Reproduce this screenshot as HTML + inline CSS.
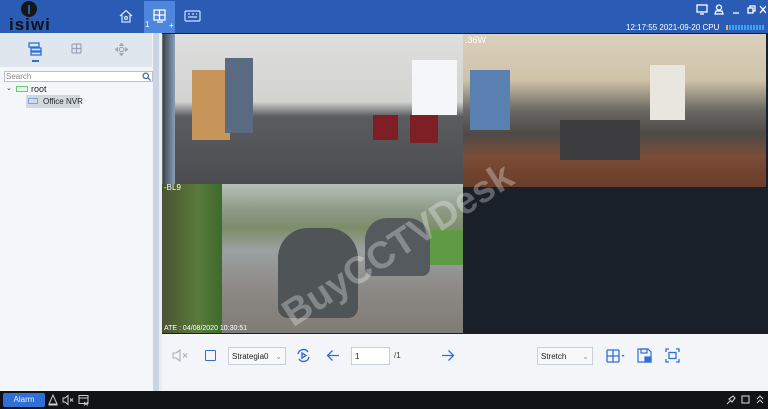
<!DOCTYPE html>
<html><head><meta charset="utf-8"><style>
*{margin:0;padding:0;box-sizing:border-box}
body{width:768px;height:409px;overflow:hidden;background:#f3f5f8;font-family:"Liberation Sans",sans-serif;position:relative}
.abs{position:absolute}
.sel{display:flex;justify-content:space-between;align-items:center;white-space:nowrap}
</style></head><body>
<div class="abs" style="left:0;top:0;width:768px;height:33px;background:#2a5cb6"></div>
<div class="abs" style="left:144px;top:1px;width:31px;height:32px;background:#4f86dd"></div>
<div class="abs" style="left:21px;top:1px;width:16px;height:16px;border-radius:50%;background:#161616"></div>
<div class="abs" style="left:28px;top:5px;width:2px;height:9px;background:#2a5cb6"></div>
<div class="abs" style="left:9px;top:15px;font:bold 17px 'Liberation Sans',sans-serif;color:#111;letter-spacing:1px">isiwi</div>
<svg class="abs" style="left:118px;top:8px" width="16" height="16" viewBox="0 0 16 16" fill="none" stroke="#cfe0fb" stroke-width="1.3"><path d="M2 8 8 2.5 14 8M4 7v7h8V7"/><circle cx="8" cy="10" r="1.5"/></svg>
<svg class="abs" style="left:152px;top:8px" width="16" height="16" viewBox="0 0 16 16" fill="none" stroke="#fff" stroke-width="1.3"><rect x="2" y="2" width="11" height="10"/><path d="M7.5 2v10M2 7h11M5 14h6"/></svg>
<div class="abs" style="left:145px;top:20px;font-size:8px;color:#fff">1</div>
<div class="abs" style="left:169px;top:21px;font-size:8px;color:#fff">+</div>
<svg class="abs" style="left:184px;top:10px" width="17" height="12" viewBox="0 0 17 12" fill="none" stroke="#cfe0fb" stroke-width="1.2"><rect x="1" y="1" width="15" height="10" rx="1"/><path d="M4 4h2M8 4h2M12 4h1M4 7h9"/></svg>
<svg class="abs" style="left:696px;top:4px" width="70" height="12" viewBox="0 0 70 12" fill="none" stroke="#fff" stroke-width="1.3"><rect x="1" y="1" width="10" height="7"/><path d="M4 10h4"/><circle cx="23" cy="3.5" r="2.5"/><path d="M19 10h8l-1-3h-6z"/><path d="M37 9h6"/><rect x="52" y="4" width="5" height="5"/><path d="M54 4V2h5v5h-2"/><path d="M64 2l6 7M70 2l-6 7"/></svg>
<div class="abs" style="left:626px;top:23px;font-size:8px;color:#fff;white-space:nowrap">12:17:55 2021-09-20 CPU</div>
<div class="abs" style="left:726px;top:25px;width:2px;height:5px;background:#f2b233"></div>
<div class="abs" style="left:729px;top:25px;width:36px;height:5px;background:repeating-linear-gradient(90deg,#39a3ff 0 2px,#2a5cb6 2px 3px)"></div>

<div class="abs" style="left:0;top:33px;width:152px;height:358px;background:#f4f7fa"></div>
<div class="abs" style="left:0;top:33px;width:152px;height:34px;background:#dfe6ee"></div>
<svg class="abs" style="left:28px;top:42px" width="14" height="14" viewBox="0 0 14 14" fill="none" stroke="#2f6fd6" stroke-width="1.3"><rect x="1" y="1" width="10" height="4"/><rect x="3" y="6" width="10" height="3"/><rect x="3" y="10" width="10" height="3"/></svg>
<div class="abs" style="left:32px;top:60px;width:7px;height:1.5px;background:#2f6fd6"></div>
<svg class="abs" style="left:71px;top:43px" width="11" height="11" viewBox="0 0 11 11" fill="none" stroke="#9aa6b4" stroke-width="1.2"><rect x="1" y="1" width="9" height="9" rx="1"/><path d="M5.5 1v9M1 5.5h9"/></svg>
<svg class="abs" style="left:115px;top:43px" width="13" height="13" viewBox="0 0 13 13" fill="none" stroke="#9aa6b4" stroke-width="1.1"><circle cx="6.5" cy="6.5" r="2.2"/><path d="M6.5 0.5l-1.5 2h3zM6.5 12.5l-1.5-2h3zM0.5 6.5l2-1.5v3zM12.5 6.5l-2-1.5v3z"/></svg>
<div class="abs" style="left:4px;top:71px;width:149px;height:11px;background:#fff;border:1px solid #b8c2cc"></div>
<div class="abs" style="left:6px;top:72px;font-size:8px;color:#888">Search</div>
<svg class="abs" style="left:142px;top:72px" width="9" height="9" viewBox="0 0 9 9" fill="none" stroke="#3866a8" stroke-width="1.2"><circle cx="3.8" cy="3.8" r="2.7"/><path d="M5.8 5.8 8.5 8.5"/></svg>
<div class="abs" style="left:6px;top:84px;font-size:7px;color:#333">⌄</div>
<div class="abs" style="left:16px;top:86px;width:12px;height:6px;border:1.5px solid #6acb6a;background:#e5f7e5"></div>
<div class="abs" style="left:31px;top:84px;font-size:9px;color:#222">root</div>
<div class="abs" style="left:26px;top:95px;width:54px;height:13px;background:#d3d8de"></div>
<div class="abs" style="left:28px;top:98px;width:10px;height:6px;border:1px solid #7fa5d3;background:#c9dcf2"></div>
<div class="abs" style="left:43px;top:97px;font-size:8px;color:#222">Office NVR</div>
<div class="abs" style="left:153px;top:33px;width:6px;height:358px;background:#c9d5e2"></div>
<div class="abs" style="left:159px;top:33px;width:3px;height:358px;background:#e8eef4"></div>

<div class="abs" style="left:162px;top:33px;width:606px;height:301px;background:#1a2029"></div>
<div class="abs" style="left:463px;top:34px;width:303px;height:153px;background:linear-gradient(180deg,#d9d0bd 0%,#cfc3a8 30%,#6a6864 50%,#4d4a47 65%,#7a4d36 80%,#6a3c2a 100%)"></div>
<div class="abs" style="left:470px;top:70px;width:40px;height:60px;background:#5a7fb1"></div>
<div class="abs" style="left:650px;top:65px;width:35px;height:55px;background:#e9e6df"></div>
<div class="abs" style="left:560px;top:120px;width:80px;height:40px;background:#3c3c3e"></div>
<div class="abs" style="left:465px;top:35px;font-size:9px;color:#fff">.36W</div>
<div class="abs" style="left:162px;top:183px;width:301px;height:150px;background:linear-gradient(180deg,#b7c2b8 0%,#8d9a86 18%,#7d8d6a 30%,#9aa1a2 45%,#8d8a86 70%,#7f7b76 100%)"></div>
<div class="abs" style="left:162px;top:183px;width:60px;height:150px;background:linear-gradient(90deg,#4b5232,#5a7a3a 60%,#3d6a2c)"></div>
<div class="abs" style="left:380px;top:230px;width:83px;height:35px;background:#5f9a44"></div>
<div class="abs" style="left:278px;top:228px;width:80px;height:90px;border-radius:30px 30px 10px 10px;background:#4f5456"></div>
<div class="abs" style="left:365px;top:218px;width:65px;height:58px;border-radius:22px 22px 8px 8px;background:#555a5e"></div>
<div class="abs" style="left:164px;top:183px;font-size:8px;color:#fff">-BL9</div>
<div class="abs" style="left:164px;top:325px;font-size:7px;color:#fff">ATE : 04/08/2020 10:30:51</div>
<div class="abs" style="left:162px;top:34px;width:301px;height:150px;background:#6a6e6e"></div>
<div class="abs" style="left:175px;top:34px;width:288px;height:150px;background:linear-gradient(180deg,#dedede 0%,#d3d3d1 45%,#5a5c60 55%,#4a4c50 100%)"></div>
<div class="abs" style="left:192px;top:70px;width:38px;height:70px;background:#c7955a"></div>
<div class="abs" style="left:225px;top:58px;width:28px;height:75px;background:#5a6a80"></div>
<div class="abs" style="left:412px;top:60px;width:45px;height:55px;background:#f4f6f8"></div>
<div class="abs" style="left:373px;top:115px;width:25px;height:25px;background:#7d1f24"></div>
<div class="abs" style="left:410px;top:115px;width:28px;height:28px;background:#7d1f24"></div>
<div class="abs" style="left:163px;top:34px;width:12px;height:150px;background:linear-gradient(90deg,#3a4450,#8aa0b8)"></div>
<div class="abs" style="left:275px;top:300px;font:bold 38px 'Liberation Sans',sans-serif;color:rgba(255,255,255,0.3);transform:rotate(-33deg);transform-origin:left top;white-space:nowrap">BuyCCTVDesk</div>

<div class="abs" style="left:162px;top:334px;width:606px;height:57px;background:#f3f5f8"></div>
<svg class="abs" style="left:172px;top:349px" width="16" height="13" viewBox="0 0 16 13" fill="none" stroke="#a8b0bb" stroke-width="1.1"><path d="M1 4h3l4-3v11l-4-3H1z"/><path d="M11 4.5l4 4M15 4.5l-4 4"/></svg>
<div class="abs" style="left:205px;top:350px;width:11px;height:11px;border:1.5px solid #2f6fd6;border-radius:1px"></div>
<div class="abs sel" style="left:228px;top:347px;width:58px;height:18px;border:1px solid #c8d0d9;background:#f6f8fa;font-size:8px;padding:0 3px;color:#222"><span>Strategia0</span><span style="color:#999">⌄</span></div>
<svg class="abs" style="left:296px;top:348px" width="15" height="15" viewBox="0 0 15 15" fill="none" stroke="#2f6fd6" stroke-width="1.4"><path d="M2 6a5.5 5.5 0 0 1 10-2M13 9a5.5 5.5 0 0 1-10 2"/><path d="M6 5v5l4-2.5z"/></svg>
<svg class="abs" style="left:326px;top:349px" width="14" height="13" viewBox="0 0 14 13" fill="none" stroke="#2f6fd6" stroke-width="1.3"><path d="M13 6.5H1.5M6.5 1.5 1.5 6.5l5 5"/></svg>
<div class="abs sel" style="left:351px;top:347px;width:39px;height:18px;border:1px solid #c8d0d9;background:#fff;font-size:8px;padding:0 3px;color:#222">1</div>
<div class="abs" style="left:394px;top:351px;font-size:8px;color:#333">/1</div>
<svg class="abs" style="left:441px;top:349px" width="14" height="13" viewBox="0 0 14 13" fill="none" stroke="#2f6fd6" stroke-width="1.3"><path d="M1 6.5h11.5M7.5 1.5l5 5-5 5"/></svg>
<div class="abs sel" style="left:537px;top:347px;width:56px;height:18px;border:1px solid #c8d0d9;background:#f6f8fa;font-size:8px;padding:0 3px;color:#222"><span>Stretch</span><span style="color:#999">⌄</span></div>
<svg class="abs" style="left:606px;top:349px" width="20" height="14" viewBox="0 0 20 14" fill="none" stroke="#2f6fd6" stroke-width="1.3"><rect x="1" y="1" width="12" height="12" rx="1"/><path d="M7 1v12M1 7h12"/><path d="M15.5 6h3l-1.5 2z" fill="#2f6fd6" stroke="none"/></svg>
<svg class="abs" style="left:637px;top:348px" width="15" height="15" viewBox="0 0 15 15" fill="none" stroke="#2f6fd6" stroke-width="1.2"><path d="M1 1h10l3 3v10H1z"/><rect x="4" y="1" width="6" height="4"/><rect x="8" y="9" width="6" height="5" fill="#2f6fd6"/></svg>
<svg class="abs" style="left:665px;top:348px" width="15" height="15" viewBox="0 0 15 15" fill="none" stroke="#2f6fd6" stroke-width="1.3"><path d="M1 4V1h3M11 1h3v3M14 11v3h-3M4 14H1v-3"/><rect x="4" y="4.5" width="7" height="6"/></svg>

<div class="abs" style="left:0;top:391px;width:768px;height:18px;background:#121316"></div>
<div class="abs" style="left:3px;top:393px;width:42px;height:14px;background:#2f6fd6;border-radius:2px;color:#e8f0ff;font-size:8px;text-align:center;line-height:14px">Alarm</div>
<svg class="abs" style="left:48px;top:394px" width="42" height="12" viewBox="0 0 42 12" fill="none" stroke="#ccc" stroke-width="1"><path d="M5 1 1 10h8z"/><path d="M0.5 11h9"/><path d="M15 4h2l3-2.5v9L17 8h-2z"/><path d="M22 4.5l3 3M25 4.5l-3 3"/><rect x="31" y="1.5" width="9" height="8"/><path d="M31 4h9M36 8l4 3.5M40 8l-4 3.5"/></svg>
<svg class="abs" style="left:726px;top:394px" width="38" height="11" viewBox="0 0 38 11" fill="none" stroke="#ccc" stroke-width="1.1"><path d="M1 10l3-3M3 5l3 3 3-4-2-2z"/><rect x="16" y="2" width="7" height="7"/><path d="M31 5l3-3 3 3M31 9l3-3 3 3"/></svg>
</body></html>
